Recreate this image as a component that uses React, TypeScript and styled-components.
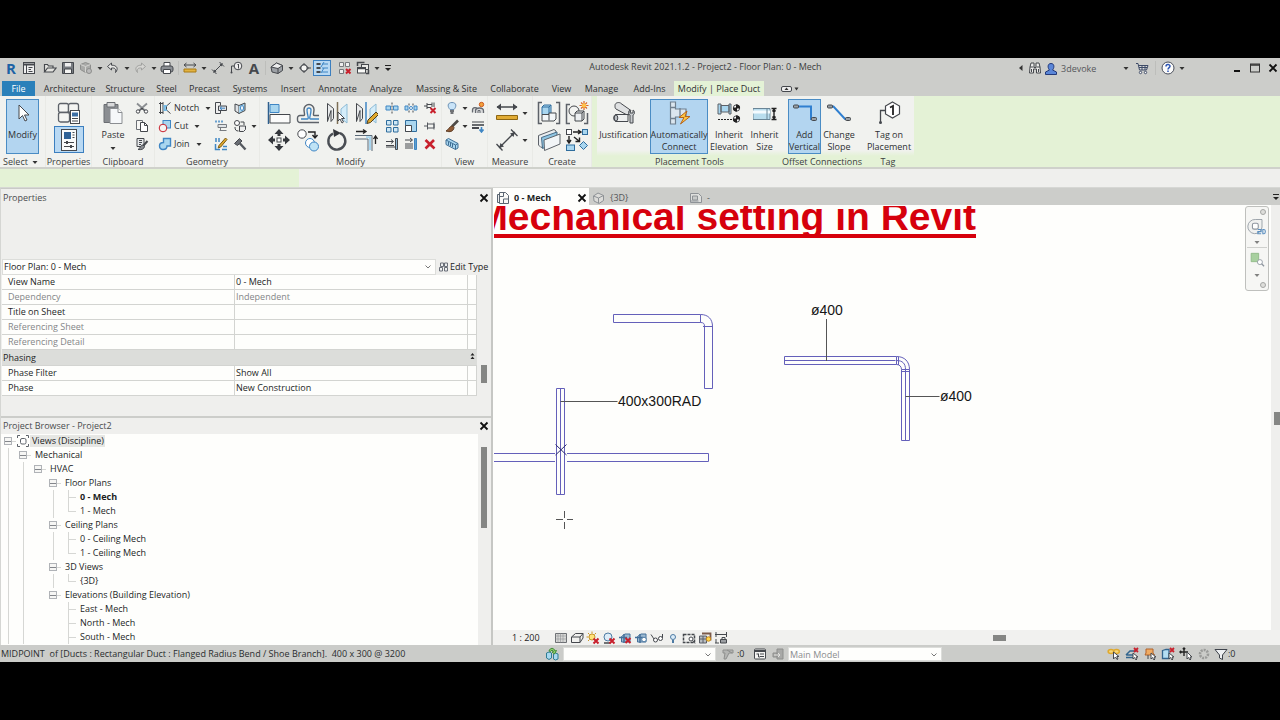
import React, { ReactNode } from 'react';
import styled, { createGlobalStyle, css } from 'styled-components';

const FONT = '"Open Sans", "Noto Sans", sans-serif';
const INK = '#45484d';
const BLUE = '#3f86c4';
const SKY = '#a9d6ef';
const RED = '#c8202c';
const GOLD = '#e0a92e';

const GlobalStyle = createGlobalStyle`
  * { box-sizing: border-box; }
  body { margin: 0; background: #000; }
  button, input, select { font: inherit; color: inherit; margin: 0; padding: 0; border: 0; background: none; border-radius: 0; }
  ul { list-style: none; margin: 0; padding: 0; }
`;

/* ---------- icons: 14px grid for small tools, 24px grid for large ones ---------- */

const small: Record<string, ReactNode> = {
  home: <><rect x="1.500" y="1.500" width="11" height="11" fill="#eee" stroke={INK} /><path d="M2 3.500h10" stroke={INK} strokeWidth="2" /><path d="M4.500 4v8M6.500 6.500h4M6.500 8.500h2.500M6.500 10.500h4" stroke={INK} /></>,
  open: <path d="M1.500 11V3.500h3l1 1.500H10v2M1.500 11L4.500 7h8.500L10 11z" fill="#e3e3df" stroke={INK} strokeWidth="1.200" />,
  save: <><path d="M1.500 1.500h11v11h-11z" fill="#777b80" stroke={INK} /><path d="M4 2h6v3.500H4z" fill="#eee" /><path d="M3.500 8h7v4.500h-7z" fill="#f4f4f2" stroke={INK} /></>,
  sync: <><path d="M6.500 1.500l5 2v5l-5 3-5-3v-5z" fill="#a9aaa8" stroke="#8d8e8c" /><path d="M1.500 3.500l5 2 5-2M6.500 5.500v6" stroke="#d4d4d1" fill="none" /><circle cx="10" cy="10" r="2.500" fill="#bbb" stroke="#8d8e8c" /></>,
  undo: <path d="M5.500 2L1.500 5.500l4 3.500V7c3-.2 5 .6 4 4.500 3.500-4 1-7.500-4-7.300z" fill="#e6e6e3" stroke={INK} />,
  redo: <path d="M8.500 2l4 3.500-4 3.500V7c-3-.2-5 .6-4 4.500C1 7.500 3.500 4 8.500 4.200z" fill="#d6d6d3" stroke="#a0a19f" />,
  print: <><path d="M4 5V1.500h6V5" fill="#fff" stroke={INK} /><rect x="1" y="5" width="12" height="6" rx="2" fill="#8b8f94" stroke={INK} /><path d="M3.500 8.500h7v4h-7z" fill="#fff" stroke={INK} /></>,
  measure: <><path d="M2 4h10" stroke={INK} /><path d="M3.500 2L1 4l2.500 2M10.500 2L13 4l-2.500 2" stroke={INK} fill="none" /><path d="M1 8h12v3H1z" fill="#e3b341" stroke="#a87a17" /></>,
  dim: <><path d="M2.500 11.500l9-9" stroke={INK} /><path d="M1 8.500L5.500 13M8.500 1L13 5.500" stroke={INK} /><path d="M2.500 11.500l.5-3 2.500 2.500zM11.500 2.500l-.5 3L8.500 3z" fill={INK} /></>,
  tag: <><circle cx="9" cy="5" r="3.800" fill="#eee" stroke={INK} /><path d="M5 5H2.500v7M8.500 4l1-1v4.500" stroke={INK} fill="none" /><circle cx="2.500" cy="11.500" r="1" fill={INK} /></>,
  view3d: <><path d="M1 6l5.500-4L12.500 4.500v5L8 12.500 2 11z" fill="#9da1a6" stroke={INK} /><path d="M1 6l5.500-4 6 2.500L8 7.500z" fill="#eceded" stroke={INK} /><path d="M8 7.500v5" stroke={INK} /></>,
  section: <><path d="M7 2L12 7l-5 5-5-5z" fill={INK} /><circle cx="7" cy="7" r="3.200" fill="#f4f4f2" stroke={INK} /><path d="M11 7h3" stroke={INK} /></>,
  thin: <><path d="M1.500 3h4M1.500 7h4M1.500 11h4" stroke={INK} strokeWidth="2" /><path d="M7 3h6M7 7h6M7 11h6" stroke={BLUE} /><path d="M9 1L6 6M9 7l-3 5" stroke={BLUE} /></>,
  closeHidden: <><path d="M1.500 1.500h4v4h-4zM7.500 1.500h4v4h-4zM1.500 8.500h4v4h-4z" fill="#eee" stroke="#777a7e" /><path d="M8 8l4.500 4.500M12.500 8L8 12.500" stroke={RED} strokeWidth="2" /></>,
  switchWin: <><path d="M1.500 5V1.500h7M12.500 9v3.500H10" stroke={INK} strokeWidth="1.500" /><rect x="5.500" y="3.500" width="7" height="5" fill="#e9e9e6" stroke={INK} /><rect x="1.500" y="6.500" width="8" height="5.500" fill="#fafaf8" stroke={INK} /><path d="M1.500 7.500h8" stroke={INK} strokeWidth="1.500" /></>,
  customize: <><path d="M4 4.500h6" stroke="#222" /><path d="M4 7h6l-3 3z" fill="#222" /></>,
  caret: <path d="M4.500 6h5L7 9z" fill="#333" />,
  left: <path d="M8.500 4v6L5 7z" fill="#333" />,
  binoculars: <path d="M2 6l1-4h3v4.500h2V2h3l1 4 .5 6H8.500V8h-3v4H1.500zM2 6h3.500M8.500 6H12M3.500 8v3M10.500 8v3" fill="#ececea" stroke={INK} />,
  person: <path d="M7 1.500c4 0 3.200 5 1.500 6.500l4 2v2.500h-11V10l4-2C3.800 6.500 3 1.500 7 1.500z" fill="#5a86d8" stroke="#233a7a" />,
  cart: <><path d="M1 2.500h2l1.500 6.500h7L13 4.500H4" fill="#d9dadb" stroke="#3d4a66" /><path d="M4 6.500h8M7 4.500V9M10 4.500V9" stroke="#3d4a66" /><circle cx="5.500" cy="11.500" r="1.200" fill="#fff" stroke="#3d4a66" /><circle cx="10.500" cy="11.500" r="1.200" fill="#fff" stroke="#3d4a66" /></>,
  help: <><circle cx="7" cy="7" r="6" fill="#fbfbfa" stroke="#4a4f5c" /><path d="M5 5.500C5 3 9 3 9 5.300 9 6.700 7 6.700 7 8.500M7 9.500v1.500" stroke="#2d56b5" strokeWidth="1.500" fill="none" /></>,
  min: <path d="M4 10h6" stroke="#111" strokeWidth="2" />,
  max: <><rect x="2.500" y="3" width="9" height="8" fill="none" stroke="#333" /><path d="M2.500 4h9" stroke="#333" strokeWidth="1.500" /></>,
  x: <path d="M3.500 3.500l7 7M10.500 3.500l-7 7" stroke="#111" strokeWidth="1.800" />,
  /* clipboard + geometry */
  scissors: <><path d="M2 2.500l8 7M12 2.500l-8 7" stroke="#8b8e92" strokeWidth="1.800" /><circle cx="3" cy="10.500" r="1.700" fill="#fff" stroke={INK} /><circle cx="11" cy="10.500" r="1.700" fill="#fff" stroke={INK} /><path d="M6 7l4 3M8 7l-4 3" stroke={INK} /></>,
  copy: <><path d="M1.500 1.500h6v9h-6z" fill="#f7f7f5" stroke="#6c7076" /><path d="M5.500 3.500h4l3 3v6h-7z" fill="#fff" stroke={INK} /><path d="M9.500 3.500v3h3" stroke={INK} fill="none" /></>,
  match: <><path d="M2 1.500h7v8H2z" fill="#e6e8ea" stroke={INK} /><path d="M4 3.500h3M4 5.500h3M4 7.500h2" stroke={INK} /><path d="M12.500 4L8.500 8.500" stroke={INK} strokeWidth="2" /><path d="M8 8c-3 0-2 3-5 4.500 4 .5 6-.5 6.500-3z" fill="#8b8e92" stroke={INK} /></>,
  notch: <><path d="M1 2.500h4M1 11.500h4M2.500 1v12M5 1v12" stroke={INK} /><path d="M12.500 1.500L8.500 5v4l4 3.500" stroke={INK} fill="none" /><path d="M5.500 4h4L7.500 7l2 3h-4z" fill="#78bce6" /></>,
  cut: <><rect x="5" y="1.500" width="7.500" height="7.500" fill={SKY} stroke={BLUE} /><circle cx="5" cy="9" r="3.800" fill="#f4f5f3" stroke={RED} /></>,
  join: <path d="M5.500 1.500h7V9H9c0 2.500-1.500 3.500-4 3.500S1.500 11 1.500 8.800 3 5.500 5.500 5.500z" fill={SKY} stroke={BLUE} strokeWidth="1.400" />,
  cope: <><path d="M1.500 1.500h5V4.500M1.500 1.500v11h5V10" fill="#eee" stroke={INK} /><path d="M4.500 5h8v4.500h-8z" fill="#dfe3e6" stroke={INK} /><path d="M11 7.200H6M8 5.500L6 7.200 8 9" stroke={BLUE} fill="none" /></>,
  wallJoin: <><path d="M2 1.500v2M5 1.500v2M8 1.500v2" stroke={BLUE} strokeWidth="1.500" /><path d="M4 5.500h8.500v3H4zM5.500 11.500h7M6.500 8.500v3" fill="#dfe3e6" stroke="#777b80" /></>,
  splitFace: <><path d="M2 1v4M5 1v4" stroke={BLUE} strokeWidth="1.500" /><path d="M11.500 1L5 8.500l-.8 2.500 2.500-1L13 2.500z" fill={GOLD} stroke="#7b5b14" /><path d="M1.500 7v5.500H6M8 12.500h5M9 9.500h4" stroke={BLUE} fill="none" strokeWidth="1.500" /></>,
  face: <><path d="M2 3l4 1.500v8L2 10z" fill="#dfe3e6" stroke={INK} /><path d="M6 4.500L12 2v7.500l-6 3" fill={SKY} stroke={INK} /><ellipse cx="9" cy="7" rx="1.500" ry="2.500" fill="#fff" stroke={BLUE} /></>,
  paint2: <><circle cx="4" cy="4" r="2.500" fill="#fff" stroke={INK} /><path d="M7.500 3h3.500v3M2 8c0 3 1 4 3.500 4" stroke={INK} fill="none" /><path d="M6.500 7h6v3.500l-2 2h-4z" fill="#eceded" stroke={INK} /></>,
  hammer: <><path d="M1.500 6.500l5-5L9 4 4.500 8.500z" fill="#6a6e74" stroke={INK} /><path d="M6.500 6l6 6.500" stroke="#55595f" strokeWidth="2.400" /></>,
  /* modify small */
  split: <><path d="M1 5h4.500v4H1zM8.500 5H13v4H8.500z" fill={SKY} stroke={BLUE} /><path d="M7 1.500v11" stroke={INK} strokeDasharray="2 1" /></>,
  splitGap: <><path d="M1 5h3v4H1zM10 5h3v4h-3z" fill={SKY} stroke={BLUE} /><circle cx="7" cy="7" r="1.500" fill="#fff" stroke={BLUE} /><path d="M5 2.500v2M9 2.500v2M5 9.500v2M9 9.500v2" stroke={INK} /></>,
  array: <path d="M1.500 1.500H6V6H1.500zM8.500 1.500H13V6H8.500zM1.500 8.500H6V13H1.500zM8.500 8.500H13V13H8.500z" fill="#cfe8f6" stroke="#2f6d9d" />,
  scale: <><path d="M1.500 1.500h11v11h-11z" fill={SKY} stroke="#2f6d9d" /><path d="M1.500 6.500h6v6h-6z" fill="#fff" stroke={INK} /></>,
  trim: <><path d="M1 4.500h7M1 10h9" stroke={INK} /><path d="M6 2.500L8.500 4.500 6 6.500M1 8.500h8" stroke={INK} fill="none" /><path d="M10.500 1.500h2v11h-2z" fill="#8fb8d4" stroke={INK} /></>,
  trimM: <><path d="M1 3h7M1 7h8M1 9h8M1 11h8" stroke={INK} /><path d="M6 1L8.500 3 6 5" stroke={INK} fill="none" /><path d="M10.500 1.500h2v11h-2z" fill="#5f9fcb" stroke={BLUE} /></>,
  unpin: <><path d="M1 5h3M4 2v6M4 3.500h5M4 6.500h4M9 1.500V6M11 1.500V6" stroke={INK} fill="none" /><path d="M7.500 7l5 5M12.500 7l-5 5" stroke={RED} strokeWidth="2" /></>,
  pin: <path d="M1 7h3.500M4.500 3.500v7M4.500 5H11v4H4.500M11 3.500v7" fill="none" stroke="#55595f" />,
  del: <path d="M2.500 3l9 8.500M11 3l-8.500 8.500" stroke={RED} strokeWidth="2.600" />,
  /* view */
  bulb: <><path d="M7 1.500c5 0 4.500 4.500 2 7H5c-2.500-2.500-3-7 2-7z" fill="#c9e4f8" stroke="#6b91b5" /><path d="M5 10h4M5.500 12h3" stroke={INK} strokeWidth="1.500" /></>,
  brush: <><path d="M13 1.500L7 7.500" stroke="#4e4b47" strokeWidth="2.600" /><path d="M7.500 7C4 7 4.500 10.500 1 12c4 1.500 7.500.5 8-3.500z" fill="#8e5a35" stroke="#5d3b22" /></>,
  cutProfile: <path d="M1 3l2.500-1.500 9.500 5V11l-2.500 1.500L1 7.500zM1 3l9.500 5v4.500M10.500 8L13 6.500M3.500 5v3M5.500 6v3M7.500 7v3" fill={SKY} stroke="#3f6f95" />,
  override: <><path d="M1.500 11.500V9C1.500 6 6 6 6 8M4.500 12V10c0-4 8-4 8 0v2" fill="#d9dadb" stroke="#666a70" strokeWidth="1.300" /><path d="M7 12V9.500h2V12" stroke="#666a70" /><circle cx="10.500" cy="3.500" r="2.200" fill="#f0a23c" stroke="#d0581c" /></>,
  linework: <><path d="M1 3h12" stroke={INK} /><path d="M1 6h12" stroke={INK} strokeWidth="1.600" /><path d="M1 9h7" stroke={INK} strokeWidth="2" /><path d="M10.500 8v4M8.500 10.500l2 2.500 2-2.500" stroke={BLUE} strokeWidth="1.600" fill="none" /></>,
  /* tabs, panels */
  plan: <><path d="M1.500 3.500h5v8h-5z" fill="#eee" stroke="#5b6672" /><path d="M3.500 1.500h6l3 3v8h-9z" fill="#fafaf8" stroke="#5b6672" /><path d="M3.500 5.500h4v-4M7.500 8h5M7.500 8v4.500" stroke="#5b6672" fill="none" /></>,
  cube: <><path d="M1.500 5L6 2l5.500 2.500v5L7 12.500 2 10z" fill="#dcdcd9" stroke="#8e9296" /><path d="M1.500 5l5 2 5-2.500M6.500 7v5" stroke="#8e9296" /></>,
  sheet: <><path d="M1.500 2.500h8l3 3v6h-11z" fill="#dfe0de" stroke="#8e9296" /><path d="M3.500 5h5v4h-5zM1.500 10h8" fill="#c8cac9" stroke="#8e9296" /></>,
  typeGrid: <path d="M4.500 3h3v3.500h-3zM8.500 3h3v3.500h-3zM3.500 7.500h3V11h-3zM8.500 7.500h3V11h-3z" fill="#eceeef" stroke="#6a6f78" />,
  views: <><rect x="4.500" y="4.500" width="5.500" height="5.500" rx="1.500" fill="#fff" stroke="#5f646b" /><path d="M1.500 4V1.500H4M10 1.500h2.500V4M12.500 10v2.500H10M4 12.500H1.500V10" fill="none" stroke="#5f646b" /></>,
  /* view control bar */
  hatch: <><path d="M1.500 2.500h11v9h-11z" fill="#d7d8d6" stroke="#6c6f73" /><path d="M1.500 5h11M1.500 8h11M4 2.500v9M6.500 2.500v9M9 2.500v9" stroke="#84878b" strokeDasharray="1 1" /></>,
  box: <><path d="M1.500 6l4-3.500H13V7l-3 4.500H1.500z" fill="#f1f1ef" stroke={INK} /><path d="M1.500 6H10v5.500M10 6l3-3.500" stroke={INK} /></>,
  sunX: <><circle cx="6" cy="6" r="3" fill="#ffe27a" stroke="#c9962a" /><path d="M6 .5v2M.5 6h2M2 2l1.500 1.500M10 2L8.500 3.500M2 10l1.500-1.500" stroke="#c9962a" /><path d="M7.500 7.500l5 5M12.500 7.500l-5 5" stroke={RED} strokeWidth="2" /></>,
  shadowX: <><circle cx="6" cy="6" r="4" fill="#dcecf8" stroke="#4e7ba3" /><path d="M2 12h6" stroke={INK} strokeWidth="1.500" /><path d="M7.500 7.500l5 5M12.500 7.500l-5 5" stroke={RED} strokeWidth="2" /></>,
  cropX: <><path d="M3.500 11V5.500L7 3h5v8z" fill="#9dbad2" stroke="#44709a" /><path d="M1 6.500h8M6 3v9" stroke="#44709a" strokeWidth="1.500" /><path d="M7.500 7l5 5M12.500 7l-5 5" stroke={RED} strokeWidth="2" /></>,
  crop: <><path d="M3.500 11V5.500L7 3h5v8z" fill="#9dbad2" stroke="#44709a" /><path d="M1 6.500h8M6 3v9" stroke="#44709a" strokeWidth="1.500" /><circle cx="10" cy="8.500" r="2.300" fill="#fff" stroke="#4e7ba3" /></>,
  glasses: <><path d="M1 3.500l3 4.500M12.500 3v4" stroke={INK} /><circle cx="5.500" cy="9" r="2" fill="#fff" stroke={INK} /><circle cx="10.500" cy="7.500" r="2" fill="#fff" stroke={INK} /></>,
  bulbS: <><circle cx="7" cy="6" r="2.500" fill="#dcecf8" stroke="#4e7ba3" /><path d="M7 9v3" stroke="#4e7ba3" strokeWidth="2" /></>,
  tempView: <><path d="M1.500 3.500h11v8h-11z" fill="#f1f1ef" stroke={INK} strokeWidth="1.500" strokeDasharray="3 1" /><circle cx="9" cy="8" r="2" fill="#fff" stroke={INK} /><path d="M10.500 9.500L13 12.500" stroke={INK} /></>,
  analytic: <><path d="M1.500 5h7v7h-7z" fill="#b7bcc1" stroke="#5b5f66" /><path d="M1.500 8h7M5 5v7" stroke="#5b5f66" /><path d="M4 2.500h8.500v7" stroke="#7b5a4a" strokeWidth="1.800" fill="none" /><circle cx="10.500" cy="8" r="2.200" fill="#ffd64d" stroke="#c98a1a" /></>,
  constraint: <><path d="M1 3.500h12M2 1v5M12.500 1v5M2 8v4M5 12H1" stroke={INK} /><path d="M6.500 8.500h6V12h-6z" fill="#9b9ea2" stroke={INK} /><path d="M8 8.500V6.500h3v2" fill="none" stroke={INK} /></>,
  /* status bar */
  worksets: <><path d="M1.500 6v5L4 12.500 6.500 11V6L4 5z" fill="#a7d8ef" stroke="#2f7c93" /><path d="M8.500 7v5l2 1 2.500-1V7L10.500 6z" fill="#a7d8ef" stroke="#2f7c93" /><path d="M4 4c1-3.500 5-3.500 6 0l1.500-.5L9.500 7 7 5l1.500-.5C8 3 6 3 5.500 4.500z" fill="#8ed06c" stroke="#3f8a35" /></>,
  request: <path d="M2 3h10v3H8l-3 6H3l1-6H2zM6 3l5 3" fill="#b4b5b3" stroke="#8e8f8d" />,
  options: <><rect x="1.500" y="2" width="11" height="10" rx="1" fill="#f4f4f2" stroke={INK} /><path d="M1.500 4h11" stroke={INK} strokeWidth="2" /><path d="M3.500 7H6M7 7h4M7 9.500h4M5.500 7v3H7" stroke={INK} /></>,
  optGrey: <><path d="M6 2h6v10H6zM2 6h4v4H2z" fill="#a8a9a7" stroke="#8e8f8d" /><path d="M3 8h6M7 6l2 2-2 2" stroke="#e2e2df" fill="none" /></>,
  selLink: <><ellipse cx="4" cy="4.500" rx="2.800" ry="2" fill="#f6d87c" stroke={GOLD} strokeWidth="1.600" /><ellipse cx="9.500" cy="4.500" rx="2.800" ry="2" fill="#f6d87c" stroke={GOLD} strokeWidth="1.600" /><path d="M6.500 5v7l2-2 1.500 2.500L11 12 9.800 9.500H12z" fill="#fff" stroke={INK} /></>,
  selUnder: <><path d="M1 8l4-4h6M1 8h7M1 10.500h7" fill="none" stroke="#33658e" strokeWidth="1.500" /><path d="M9 1l4 4M13 1L9 5" stroke={RED} strokeWidth="1.800" /><path d="M8 6v6l1.500-1.500L11 13l1-1-1-2h2z" fill="#fff" stroke={INK} /></>,
  selPin: <><path d="M3 2h7v4l1.500 2H2l1-2z" fill="#f0ab62" stroke="#b1622a" /><path d="M5 8v4" stroke={INK} /><path d="M8 6v6l1.500-1.500L11 13l1-1-1-2h2z" fill="#fff" stroke={INK} /></>,
  selFace: <><path d="M1.500 3.500L5 2.500h3v9H1.500z" fill="#b3def3" stroke="#33658e" strokeWidth="1.300" /><path d="M9 1l4 4M13 1L9 5" stroke={RED} strokeWidth="1.800" /><path d="M8 6v6l1.500-1.500L11 13l1-1-1-2h2z" fill="#fff" stroke={INK} /></>,
  dragSel: <><path d="M5 1v8M1 5h8M3.800 2.200L5 1l1.200 1.200M2.200 3.800L1 5l1.200 1.200" stroke="#222" strokeWidth="1.400" fill="none" /><path d="M8 5v7l1.500-1.500L11 13l1-1-1-2h2z" fill="#fff" stroke={INK} /></>,
  gear: <circle cx="7" cy="7" r="4" fill="none" stroke="#9a9b99" strokeWidth="2.600" strokeDasharray="2 1" />,
  filter: <path d="M1 2.500h12L8.500 8v4.500l-3-1.500V8z" fill="#eef0f2" stroke="#3e434b" />,
  expand: <path d="M2.500 5.500L4.500 3l2 2.500zM2.500 9L4.500 6.500l2 2.500z" fill="#222" />,
  chevron: <path d="M4.500 5.500L7 8l2.500-2.500" stroke="#777" fill="none" />,
};

const large: Record<string, ReactNode> = {
  pointer: <path d="M8 4v14l3.500-3.500L14 20l2-1-2.500-5H18z" fill="#fff" stroke={INK} />,
  typeProps: <><rect x="1.500" y="2.500" width="10" height="9" rx="2" fill="#f4f5f3" stroke="#5d6269" strokeWidth="1.300" /><rect x="11.500" y="2.500" width="10" height="9" rx="2" fill="#f4f5f3" stroke="#5d6269" strokeWidth="1.300" /><rect x="1.500" y="11.500" width="11" height="9.500" rx="2" fill="#f4f5f3" stroke="#5d6269" strokeWidth="1.300" /><rect x="13.500" y="9.500" width="9" height="13" fill="#fff" stroke={INK} /><path d="M15 11.500h6v4h-6z" fill="#3c6fa5" /><path d="M15 17.500h6M15 20h6" stroke={INK} /></>,
  props: <><rect x="4.500" y="1.500" width="15" height="21" fill="#fafbfb" stroke={INK} /><path d="M7 4h7v7H7z" fill="#2f6297" /><path d="M15.500 4.500h2M15.500 7h2M15.500 9.500h2M7 14.500h10M7 18.500h10" stroke={INK} /><path d="M10 13v3M14 17v3" stroke={INK} strokeWidth="2" /></>,
  paste: <><path d="M3 3.500h14v18H3z" fill="#8b8e92" stroke="#6b6e73" /><path d="M6 1.500h8V6H6z" fill="#d9dadb" stroke="#6b6e73" /><path d="M9 7.500h8l4 4v11H9z" fill="#f6f8fa" stroke="#8b8e92" /><path d="M17 7.500v4h4" fill="#fff" stroke="#8b8e92" /></>,
  align: <><path d="M1.500 1v22" stroke="#2f5f8d" strokeWidth="1.500" /><path d="M3 3.500h9v8H3z" fill={SKY} stroke={BLUE} /><path d="M3 13.500h20v8.500H3z" fill="#fbfbfa" stroke={INK} /></>,
  offset: <><path d="M23 14.500h-4.500c-2 0-.5-2.500-.5-6a5 5 0 0 0-10 0c0 3.500 1.500 6-.5 6H4a2.500 2.500 0 0 0-2.500 2.500v2A2.500 2.500 0 0 0 4 21.500h19" fill="none" stroke="#5d6269" strokeWidth="1.400" /><path d="M23 18H14.500c-2 0 .5-4 .5-9a2 2 0 0 0-4 0c0 5 2.500 9 .5 9H5" fill="none" stroke={BLUE} strokeWidth="1.300" /></>,
  mirrorPick: <><path d="M2.500 2.500l6 5v10l-2.500 3V9.500l-3.500 11z" fill="#e9ebec" stroke={INK} /><path d="M22 3l-6 5v9l6 5z" fill="#d4edfa" stroke="#8dbbd6" /><path d="M12.500 1v22" stroke="#7d6f55" strokeWidth="1.500" /><path d="M13 11v9l2-2 2 4 1.500-1-2-3.500h3z" fill="#fff" stroke={INK} /></>,
  mirrorDraw: <><path d="M2.500 2.500l6 5v10l-2.500 3V9.500l-3.500 11z" fill="#e9ebec" stroke={INK} /><path d="M22 3l-6 5v9l6 5z" fill="#d4edfa" stroke="#8dbbd6" /><path d="M12 1v22" stroke={BLUE} strokeWidth="1.500" /><path d="M22 11l-8 8-1 3.500 3.500-1 8-8z" fill={GOLD} stroke="#4f4022" /></>,
  move: <><path d="M12 1l4.500 5h-9zM12 23l4.500-5h-9zM1 12l5-4.500v9zM23 12l-5-4.500v9z" fill="#34373c" /><path d="M12 5v3M12 16v3M5 12h3M16 12h3" stroke="#34373c" strokeWidth="3" /><rect x="10" y="10" width="4" height="4" fill="#fff" stroke={INK} /></>,
  copyL: <><circle cx="6" cy="6" r="4.200" fill="#fff" stroke={INK} /><path d="M12 4h7v5M16.500 7l2.500 3 2.500-3" fill="none" stroke="#222" strokeWidth="1.400" /><circle cx="14" cy="15" r="4.500" fill="#fff" stroke={BLUE} /><circle cx="18" cy="18.500" r="4.500" fill="#bfe3f6" stroke={BLUE} /></>,
  rotate: <><path d="M15 5.200A8.500 8.500 0 1 1 8 5.500" fill="none" stroke="#4a4e54" strokeWidth="2.400" /><path d="M8 1l8 4-7 4z" fill="#34373c" /></>,
  trimCorner: <><path d="M1 7.500h17V23M1 11h13v12" fill="none" stroke="#5b6a78" /><path d="M12 9.200h4V22" stroke={SKY} strokeWidth="2" fill="none" /><path d="M2 3.500h9M9 1.500l3 2-3 2M21.500 16V9M19.500 11l2-3 2 3" fill="none" stroke="#222" strokeWidth="1.300" /></>,
  ruler: <><path d="M2 6h20" stroke={INK} strokeWidth="1.500" /><path d="M6 2.500L1.500 6 6 9.500zM18 2.500L22.500 6 18 9.500z" fill={INK} /><path d="M1.500 14.500h21v4h-21z" fill="#e0ab34" stroke="#8d6612" /></>,
  aligned: <><path d="M4 20L20 4M1.500 16l6 6.500M16 1.500L22.500 8" stroke={INK} strokeWidth="1.300" /><path d="M4 20l1.500-5 3.500 3.500zM20 4l-1.500 5L15 5.500z" fill={INK} /></>,
  group: <><path d="M5 1.500H1.500v21H5M19 1.500h3.500v21H19" fill="none" stroke="#5d6269" strokeWidth="1.500" /><path d="M5 6l2-2h7v8l-2 1.500H5z" fill={SKY} stroke="#2f6d9d" /><path d="M5 6h7l2-2M12 6v7" stroke="#2f6d9d" /><path d="M5 13.500h7V12h7v6l-2 2H5z" fill="#f2f6f8" stroke={INK} /><path d="M12 13.500v6" stroke={INK} /></>,
  similar: <><path d="M5 3.500H1.500v19H5M19 22.500h3.500V12" fill="none" stroke="#5d6269" strokeWidth="1.500" /><circle cx="9" cy="10" r="5" fill="#f2f3f1" stroke={INK} /><path d="M10 12l2-2h7v8l-2 2h-7z" fill="#eceff1" stroke={INK} /><path d="M10 12h7v8M17 12l2-2" stroke={INK} /><path d="M19 0v9M14.500 4.500h9M16 1.500l6 6M22 1.500l-6 6" stroke="#d9662a" strokeWidth="1.200" /><circle cx="19" cy="4.500" r="2.200" fill="#ffc24a" /></>,
  assembly: <><path d="M1.500 7.500L17 1.500l2 1.500v10L4 19.500 1.500 17z" fill="#e9edf0" stroke="#5d6269" /><path d="M4.500 9.500L20 4v10L5.500 20.500z" fill="#8fc6e4" stroke="#466a86" /><path d="M7 12l16-6v10L7.500 22.500z" fill="#f2f5f7" stroke="#5d6269" /></>,
  parts: <><rect x="1.500" y="1.500" width="5" height="5" fill="#fff" stroke={INK} /><rect x="17.500" y="1.500" width="5" height="5" fill={SKY} stroke="#2f6d9d" /><path d="M8 4h7M13 2l3 2-3 2M4 8v6M2 12l2 3 2-3M9 9l5 4M14.500 9.500v4h-4" fill="none" stroke="#222" strokeWidth="1.400" /><rect x="1.500" y="17" width="8" height="5.500" fill={SKY} stroke="#2f6d9d" /><path d="M18.500 13.500l4 4-4 4-4-4z" fill={SKY} stroke="#2f6d9d" /></>,
  justify: <><path d="M3 4.500C3 1 8 1 9 2.500l10 7-3 5L4 8C3 7.500 3 6 3 4.500z" fill="#dfe1e2" stroke={INK} /><path d="M4 13.500c-3 0-3 7 0 7h12v-7z" fill="#eef0f0" stroke={INK} /><ellipse cx="4" cy="17" rx="1.800" ry="3" fill="#bcc0c4" stroke={INK} /><path d="M18 22V14c-2-1-2-4 0-5v3h3V9c2 1 2 4 0 5v8z" fill="#c9cccf" stroke={INK} /></>,
  autoConnect: <><path d="M3.500 1v22h5V16H19V8H8.500V1z" fill="#dbe6ef" stroke="#70808f" strokeWidth="1.200" /><path d="M3.500 6.500h5M3.500 17.500h5M13 7v10" stroke="#70808f" strokeWidth="1.300" /><path d="M20 10l-8 6.500h5L13.500 23 23 15.500h-5z" fill="#ffc843" stroke="#b5651d" /></>,
  inhElev: <><path d="M1 3h3v10H1zM4 4.500h8v6.500H4zM12 3h2v10h-2z" fill={SKY} stroke="#5d6269" /><path d="M1 18.500h15" stroke="#222" strokeDasharray="2 1" /><circle cx="19.500" cy="7" r="3.200" fill="#fff" stroke={INK} /><path d="M19.500 7V3.800A3.200 3.200 0 0 1 22.700 7zM19.500 7v3.200A3.200 3.200 0 0 1 16.300 7z" fill="#222" stroke="#222" /><circle cx="19.500" cy="18" r="3.200" fill="#fff" stroke={INK} /><path d="M19.500 18v-3.200a3.200 3.200 0 0 1 3.200 3.200zM19.500 18v3.200a3.200 3.200 0 0 1-3.200-3.200z" fill="#222" stroke="#222" /></>,
  inhSize: <><path d="M0 7.500h17v11H0z" fill="#b9ddee" stroke="#6a8596" /><path d="M0 11h17" stroke="#f4fbff" strokeWidth="3" /><path d="M14 7.500v11" stroke="#6a8596" /><path d="M21 8v10M18.500 7.500h5M18.500 18.500h5M19.500 10.500l1.500-2 1.500 2M19.500 15.500l1.500 2 1.500-2" stroke="#222" fill="none" strokeWidth="1.400" /></>,
  addVert: <><path d="M3 5.500h15V18h3" fill="none" stroke="#2f7fd0" strokeWidth="2" /><rect x="0.500" y="4" width="5" height="3" rx="1" fill="#9aa0a6" stroke={INK} /><rect x="18.500" y="16.500" width="5" height="3" rx="1" fill="#9aa0a6" stroke={INK} /></>,
  slope: <><path d="M3 5.500h3.500L18 18h3" fill="none" stroke="#2f7fd0" strokeWidth="2" /><rect x="0.500" y="4" width="5" height="3" rx="1" fill="#9aa0a6" stroke={INK} /><rect x="18.500" y="16.500" width="5" height="3" rx="1" fill="#9aa0a6" stroke={INK} /></>,
  tagL: <><path d="M15.500 1l7 4v8l-7 4-7-4V5z" fill="#fff" stroke={INK} strokeWidth="1.200" /><path d="M13 6.500L16 5v9" fill="none" stroke="#222" strokeWidth="1.800" /><path d="M8.500 9.500h-5V21" fill="none" stroke={INK} strokeWidth="1.300" /><circle cx="3.500" cy="21.500" r="1.500" fill={INK} /></>,
  wheel: <><path d="M10 3h8v9a8.500 8.500 0 1 1-8-9z" fill="#f0f1f0" stroke="#8d959e" /><rect x="6.500" y="7.500" width="7" height="7" rx="2" fill="#fff" stroke="#8d959e" strokeWidth="1.300" /><path d="M13 15h4v2.500h-4V20h4M19 15v5h1.500c2 0 2-5 0-5z" fill="none" stroke="#5b8fc0" strokeWidth="1.300" /></>,
  zoomRegion: <><path d="M5 4h9v10H5z" fill="#a8d09f" stroke="#8ab682" /><circle cx="15.500" cy="14.500" r="3" fill="#fff" stroke="#8d959e" /><path d="M17.500 16.500l3 3" stroke="#8d959e" strokeWidth="1.500" /></>,
};

const Svg = styled.svg`
  display: block;
  flex: none;
  fill: none;
`;
const Icon = ({ name }: { name: string }) => (
  <Svg width="14" height="14" viewBox="0 0 14 14" aria-hidden="true">{small[name]}</Svg>
);
const BigIcon = ({ name, size = 24 }: { name: string; size?: number }) => (
  <Svg width={size} height={size} viewBox="0 0 24 24" aria-hidden="true">{large[name]}</Svg>
);

/* ---------- window frame ---------- */

const Page = styled.div`
  min-height: 100vh;
  padding: 58px 0;
  display: flex;
  flex-direction: column;
  background: #000;
  font: 9px/12px ${FONT};
  color: #2f3133;
`;
const Window = styled.main`
  flex: 1;
  min-width: 0;
  display: flex;
  flex-direction: column;
  background: #efefed;
  overflow: hidden;
`;
const TitleBar = styled.header`
  display: flex;
  align-items: center;
  height: 23px;
  padding: 0 0 3px 2px;
  background: #cccdca;
`;
const Tools = styled.div`
  display: flex;
  align-items: center;
`;
const Caption = styled.h1`
  flex: 1;
  margin: 0;
  padding-bottom: 3px;
  font-size: 9px;
  font-weight: 400;
  text-align: center;
  white-space: nowrap;
  color: #3c3e40;
`;
const IconButton = styled.button<{ $w?: number; $h?: number; $on?: boolean }>`
  flex: none;
  display: flex;
  align-items: center;
  justify-content: center;
  width: ${p => p.$w ?? 18}px;
  height: ${p => p.$h ?? 16}px;
  ${p => p.$on && css`background: #b9d9f3; box-shadow: inset 0 0 0 1px #3c7fbf;`}
`;
const Rule = styled.span<{ $w?: number; $line?: boolean }>`
  flex: none;
  width: ${p => p.$w ?? 5}px;
  height: 14px;
  ${p => p.$line && css`background: linear-gradient(#bdbebb, #bdbebb) center / 1px 100% no-repeat;`}
`;
const Letter = styled.span<{ $color: string }>`
  font: 700 15px/16px ${FONT};
  color: ${p => p.$color};
`;
const Account = styled.button`
  display: flex;
  align-items: center;
  gap: 3px;
  width: 77px;
  height: 16px;
  padding-top: 1px;
  color: #55575a;
`;

const TabRow = styled.nav`
  display: flex;
  height: 15px;
  padding-left: 2px;
  background: #cccdca;
`;
const Tab = styled.button<{ $w: number; $kind?: 'file' | 'active' }>`
  flex: none;
  width: ${p => p.$w}px;
  padding-top: 1px;
  text-align: center;
  white-space: nowrap;
  ${p => p.$kind === 'file' && css`background: #2a80ba; color: #fff; margin-right: 4px;`}
  ${p => p.$kind === 'active' && css`background: #e4f2d6;`}
`;

/* ---------- ribbon ---------- */

const Ribbon = styled.section`
  display: flex;
  height: 73px;
  background: #e4f2d6;
  border-bottom: 2px solid #cfd1cb;
`;
const Panel = styled.div<{ $w: number; $ctx?: boolean }>`
  flex: none;
  width: ${p => p.$w}px;
  display: flex;
  flex-direction: column;
  ${p => p.$ctx ? '' : css`background: #f1f2ef; border-right: 1px solid #e9eae6;`}
`;
const PanelBody = styled.div<{ $pad?: number; $ctx?: boolean }>`
  display: flex;
  height: 60px;
  padding: 3px 0 3px ${p => p.$pad ?? 0}px;
  ${p => p.$ctx && css`background: linear-gradient(#f1f2ef 90%, #e4f2d6);`}
`;
const PanelTitle = styled.div`
  height: 11px;
  display: flex;
  align-items: center;
  justify-content: center;
  white-space: nowrap;
  color: #3c3e40;
`;
const BigButton = styled.button<{ $w: number; $on?: boolean }>`
  flex: none;
  display: flex;
  flex-direction: column;
  align-items: center;
  width: ${p => p.$w}px;
  height: 55px;
  padding-top: 2px;
  white-space: nowrap;
  ${p => p.$on && css`background: #b3d5f0; box-shadow: inset 0 0 0 1px #4a8cc4;`}
`;
const BigLabel = styled.span`
  padding-top: 4px;
  line-height: 12px;
`;
const Column = styled.div<{ $w: number; $rows: 2 | 3; $start?: boolean }>`
  flex: none;
  width: ${p => p.$w}px;
  display: grid;
  grid-template-rows: ${p => (p.$rows === 3 ? 'repeat(3, 18px)' : 'repeat(2, 27px)')};
  justify-items: ${p => (p.$start ? 'start' : 'center')};
  align-items: center;
`;
const TextTool = styled.button`
  display: flex;
  align-items: center;
  gap: 2px;
  white-space: nowrap;
`;
const Spacer = styled.span<{ $w: number }>`
  flex: none;
  width: ${p => p.$w}px;
`;

const OptionsBar = styled.div`
  display: flex;
  height: 19px;
  background: #efefed;
  border-bottom: 1px solid #d6d7d4;
`;
const OptionsTint = styled.div`
  flex: none;
  width: 299px;
  background: #e4f2d6;
`;

/* ---------- docked palettes ---------- */

const Workspace = styled.div`
  flex: 1;
  min-height: 0;
  display: flex;
`;
const Dock = styled.aside`
  flex: none;
  width: 493px;
  padding-top: 1px;
  display: flex;
  flex-direction: column;
  border-top: 1px solid #c9cac7;
  border-left: 1px solid #d5d6d3;
  border-right: 2px solid #c6c7c4;
`;
const PaletteHead = styled.div`
  display: flex;
  align-items: center;
  justify-content: space-between;
  height: 16px;
  padding-left: 2px;
  color: #4a4c4e;
`;
const Palette = styled.section<{ $grow?: boolean }>`
  display: flex;
  flex-direction: column;
  ${p => (p.$grow ? css`flex: 1; min-height: 0;` : css`flex: none; height: 228px; border-bottom: 2px solid #cccdca;`)}
`;
const TypeRow = styled.div`
  display: flex;
  align-items: center;
  height: 16px;
  margin-top: 53px;
  padding-left: 1px;
`;
const SelectBox = styled.span<{ $w: number; $h: number; $muted?: boolean }>`
  flex: none;
  display: grid;
  grid-template-columns: 1fr 14px;
  align-items: center;
  width: ${p => p.$w}px;
  height: ${p => p.$h}px;
  background: #fefefc;
  border: 1px solid #dcddda;
  color: ${p => (p.$muted ? '#8b8d8f' : '#222')};
  select {
    grid-area: 1 / 1 / 2 / 3;
    appearance: none;
    width: 100%;
    height: 100%;
    padding-left: 1px;
    outline: 0;
  }
  svg { grid-area: 1 / 2 / 2 / 3; pointer-events: none; }
`;
const EditType = styled.button`
  display: flex;
  align-items: center;
  white-space: nowrap;
  color: #222;
`;
const Scrolled = styled.div`
  display: flex;
  flex: 1;
  min-height: 0;
`;
const Track = styled.div<{ $top: number }>`
  flex: 1;
  display: flex;
  justify-content: flex-end;
  align-items: flex-start;
  padding: ${p => p.$top}px 4px 0 0;
`;
const Thumb = styled.span<{ $w: number; $h: number }>`
  display: block;
  width: ${p => p.$w}px;
  height: ${p => p.$h}px;
  background: #858684;
`;
const PropTable = styled.table`
  flex: none;
  align-self: flex-start;
  width: 475px;
  margin-left: 1px;
  table-layout: fixed;
  border-collapse: separate;
  border-spacing: 0;
  background: #fefefc;
  color: #1d1e1f;
  td, th {
    height: 15px;
    padding: 0 0 0 1px;
    line-height: 14px;
    font-weight: 400;
    text-align: left;
    border-right: 1px solid #d3d4d1;
    border-bottom: 1px solid #d3d4d1;
  }
`;
const PropRow = styled.tr<{ $muted?: boolean }>`
  color: ${p => (p.$muted ? '#848688' : 'inherit')};
  && th { padding-left: 6px; }
`;
const GroupRow = styled.tr`
  && th {
    height: 16px;
    background: #dcddda;
    border-right: 0;
  }
  && th:last-child { padding: 0; vertical-align: top; }
`;

const Tree = styled.ul`
  flex: none;
  width: 477px;
  overflow: hidden;
  background: #fefefc;
  color: #1d1e1f;
`;
const Branch = styled.li<{ $bold?: boolean }>`
  display: flex;
  align-items: center;
  height: 14px;
  white-space: nowrap;
  font-weight: ${p => (p.$bold ? 700 : 400)};
`;
const line = (pos: string) => `linear-gradient(#d6d7d4, #d6d7d4) ${pos} no-repeat`;
const guides: Record<string, string> = {
  ' ': 'none',
  '|': line('7px 0 / 1px 14px'),
  '+': `${line('7px 0 / 1px 14px')}, ${line('7px 7px / 8px 1px')}`,
  L: `${line('7px 0 / 1px 7px')}, ${line('7px 7px / 8px 1px')}`,
  '-': line('7px 7px / 8px 1px'),
};
const Guide = styled.span<{ $kind: string }>`
  flex: none;
  display: flex;
  align-items: center;
  width: 15px;
  height: 14px;
  padding-left: 3px;
  background: ${p => guides[p.$kind]};
`;
const Toggle = styled.button`
  width: 8px;
  height: 8px;
  && {
    border: 1px solid #b0b3b7;
    background: linear-gradient(#83868b, #83868b) center / 6px 1px no-repeat #f6f6f4;
  }
`;
const BranchName = styled.span<{ $root?: boolean }>`
  padding: 0 4px;
  ${p => p.$root && css`padding: 0 1px 0 2px; background: #e6e7e4;`}
`;

/* ---------- drawing area ---------- */

const ViewArea = styled.section`
  flex: 1;
  min-width: 0;
  display: flex;
  flex-direction: column;
`;
const ViewTabs = styled.nav`
  display: flex;
  align-items: center;
  height: 17px;
  background: #cccdca;
`;
const ViewTab = styled.button<{ $w: number; $on?: boolean }>`
  flex: none;
  display: flex;
  align-items: center;
  gap: 4px;
  width: ${p => p.$w}px;
  height: 17px;
  padding: 2px 0 0 3px;
  color: #55575a;
  ${p => p.$on && css`background: #fefefc; color: #1d1e1f; font-weight: 700;`}
  svg:nth-of-type(2) { margin-left: auto; }
`;
const Stage = styled.div`
  flex: 1;
  min-height: 0;
  display: flex;
`;
const Canvas = styled.div`
  flex: 1;
  min-width: 0;
  position: relative;
  overflow: hidden;
  background: #fefefc;
  border: solid #fefefc;
  border-width: 1px 0 0 1px;
`;
const Drawing = styled.svg`
  display: block;
  width: 100%;
  height: 100%;
  fill: none;
  text { font-family: "Liberation Sans", Arial, sans-serif; fill: #161616; font-size: 14px; }
  text.heading { font-size: 39px; font-weight: 700; fill: #d6000c; }
  .duct { stroke: #6460ba; }
  .leader { stroke: #555; }
`;
const NavBar = styled.div`
  position: absolute;
  top: 0;
  right: 2px;
  width: 24px;
  height: 85px;
  padding: 2px 0;
  display: flex;
  flex-direction: column;
  align-items: center;
  justify-content: space-between;
  border: 1px solid #bfc0bd;
  border-radius: 3px;
  background: #f6f6f4;
`;
const NavDot = styled.button`
  align-self: flex-end;
  width: 6px;
  height: 6px;
  margin-right: 2px;
  && { border: 1px solid #a5a6a4; border-radius: 50%; background: #dededb; }
`;
const NavItem = styled.div<{ $line?: boolean }>`
  display: flex;
  flex-direction: column;
  align-items: center;
  width: 20px;
  ${p => p.$line && css`border-bottom: 1px solid #cfd0cd;`}
  svg + svg { margin: -2px 0; opacity: 0.6; }
`;
const VScroll = styled.div`
  flex: none;
  width: 9px;
  display: flex;
  justify-content: flex-end;
  padding-top: 207px;
  background: #efefed;
`;
const ViewControls = styled.div`
  display: flex;
  align-items: center;
  height: 15px;
  padding: 0 1px 0 19px;
  background: #f1f1ef;
`;
const Scale = styled.button`
  width: 41px;
  text-align: left;
  color: #222;
`;
const Fill = styled.div`
  flex: 1;
`;
const HScroll = styled.div`
  flex: 1;
  display: flex;
  justify-content: center;
  padding-right: 10px;
`;

const StatusBar = styled.footer`
  display: flex;
  align-items: center;
  height: 17px;
  padding: 1px 45px 0 1px;
  background: #cbccc9;
  white-space: nowrap;
  color: #2a2c2e;
`;
const Message = styled.span`
  flex: none;
  width: 542px;
  white-space: pre;
`;
const Count = styled.span<{ $w: number }>`
  width: ${p => p.$w}px;
`;

/* ---------- data ---------- */

const tabs: [string, number][] = [
  ['Architecture', 61], ['Structure', 50], ['Steel', 33], ['Precast', 43], ['Systems', 48],
  ['Insert', 38], ['Annotate', 51], ['Analyze', 46], ['Massing & Site', 75], ['Collaborate', 61],
  ['View', 33], ['Manage', 47], ['Add-Ins', 49],
];
const viewProps: [string, string, boolean][] = [
  ['View Name', '0 - Mech', false],
  ['Dependency', 'Independent', true],
  ['Title on Sheet', '', false],
  ['Referencing Sheet', '', true],
  ['Referencing Detail', '', true],
];
const phaseProps: [string, string][] = [['Phase Filter', 'Show All'], ['Phase', 'New Construction']];
/* each character is one indent column: B box, | through line, + tee, L elbow */
const tree: [string, string][] = [
  ['B', 'Views (Discipline)'],
  ['|B', 'Mechanical'],
  ['||B', 'HVAC'],
  ['|| B', 'Floor Plans'],
  ['|| |+', '0 - Mech'],
  ['|| |L', '1 - Mech'],
  ['|| B', 'Ceiling Plans'],
  ['|| |+', '0 - Ceiling Mech'],
  ['|| |L', '1 - Ceiling Mech'],
  ['|| B', '3D Views'],
  ['|| |L', '{3D}'],
  ['|| B', 'Elevations (Building Elevation)'],
  ['||  +', 'East - Mech'],
  ['||  +', 'North - Mech'],
  ['||  +', 'South - Mech'],
];
const viewTools = ['hatch', 'box', 'sunX', 'shadowX', 'cropX', 'crop', 'glasses', 'bulbS', 'tempView', 'analytic', 'constraint'];
const selectTools = ['selLink', 'selUnder', 'selPin', 'selFace', 'dragSel', 'gear'];

const Tool = ({ name, label, w, h, on }: { name: string; label?: string; w?: number; h?: number; on?: boolean }) => (
  <IconButton aria-label={label ?? name} $w={w} $h={h} $on={on}><Icon name={name} /></IconButton>
);
const Caret = ({ w = 9 }: { w?: number }) => <Tool name="caret" label="More" w={w} />;
const Stack = ({ names, w }: { names: string[]; w: number }) => (
  <Column $w={w} $rows={3}>{names.map(n => <Tool key={n} name={n} />)}</Column>
);
const Pair = ({ names, w }: { names: string[]; w: number }) => (
  <Column $w={w} $rows={2}>
    {names.map(n => <IconButton key={n} aria-label={n} $w={26} $h={26}><BigIcon name={n} /></IconButton>)}
  </Column>
);
const Big = ({ name, lines, w, on }: { name: string; lines: string[]; w: number; on?: boolean }) => (
  <BigButton $w={w} $on={on}>
    <BigIcon name={name} />
    {lines.map((l, i) => (i === 0 ? <BigLabel key={l}>{l}</BigLabel> : <span key={l}>{l}</span>))}
  </BigButton>
);

const QuickAccess = () => (
  <Tools>
    <IconButton aria-label="Application menu"><Letter $color="#1c62a5">R</Letter></IconButton>
    <Tool name="home" label="Home" /><Rule $w={3} />
    <Tool name="open" /><Tool name="save" /><Tool name="sync" /><Caret />
    <Tool name="undo" /><Caret /><Tool name="redo" /><Caret />
    <Tool name="print" /><Rule $line /><Tool name="measure" /><Caret />
    <Rule $w={1} /><Tool name="dim" /><Tool name="tag" />
    <IconButton aria-label="Text"><Letter $color={INK}>A</Letter></IconButton><Rule $line />
    <Tool name="view3d" /><Caret /><Tool name="section" /><Tool name="thin" on /><Rule />
    <Tool name="closeHidden" /><Tool name="switchWin" /><Caret /><Tool name="customize" w={14} />
  </Tools>
);

const RibbonPanels = () => (
  <Ribbon>
    <Panel $w={46}>
      <PanelBody $pad={6}><Big name="pointer" lines={['Modify']} w={33} on /></PanelBody>
      <PanelTitle>Select<Icon name="caret" /></PanelTitle>
    </Panel>
    <Panel $w={46}>
      <PanelBody>
        <Column $w={45} $rows={2}>
          <IconButton aria-label="Type properties" $w={30} $h={26}><BigIcon name="typeProps" /></IconButton>
          <IconButton aria-label="Properties" $w={30} $h={27} $on><BigIcon name="props" /></IconButton>
        </Column>
      </PanelBody>
      <PanelTitle>Properties</PanelTitle>
    </Panel>
    <Panel $w={63}>
      <PanelBody $pad={7}>
        <BigButton $w={28}><BigIcon name="paste" /><BigLabel>Paste</BigLabel><Icon name="caret" /></BigButton>
        <Spacer $w={6} /><Stack names={['scissors', 'copy', 'match']} w={18} />
      </PanelBody>
      <PanelTitle>Clipboard</PanelTitle>
    </Panel>
    <Panel $w={105}>
      <PanelBody $pad={3}>
        <Column $w={54} $rows={3} $start>
          <TextTool><Icon name="notch" />Notch<Icon name="caret" /></TextTool>
          <TextTool><Icon name="cut" />Cut<Icon name="caret" /></TextTool>
          <TextTool><Icon name="join" />Join<Icon name="caret" /></TextTool>
        </Column>
        <Stack names={['cope', 'wallJoin', 'splitFace']} w={18} />
        <Stack names={['face', 'paint2', 'hammer']} w={20} />
        <Column $w={7} $rows={3}><span /><Caret w={7} /><span /></Column>
      </PanelBody>
      <PanelTitle>Geometry</PanelTitle>
    </Panel>
    <Panel $w={182}>
      <PanelBody $pad={4}>
        <Pair names={['align', 'move']} w={29} />
        <Pair names={['offset', 'copyL']} w={29} />
        <Pair names={['mirrorPick', 'rotate']} w={29} />
        <Pair names={['mirrorDraw', 'trimCorner']} w={29} />
        <Spacer $w={2} />
        <Stack names={['split', 'array', 'trim']} w={19} />
        <Stack names={['splitGap', 'scale', 'trimM']} w={19} />
        <Stack names={['unpin', 'pin', 'del']} w={19} />
      </PanelBody>
      <PanelTitle>Modify</PanelTitle>
    </Panel>
    <Panel $w={46}>
      <PanelBody $pad={1}>
        <Stack names={['bulb', 'brush', 'cutProfile']} w={18} />
        <Column $w={7} $rows={3}><Caret w={7} /><Caret w={7} /></Column>
        <Stack names={['override', 'linework']} w={19} />
      </PanelBody>
      <PanelTitle>View</PanelTitle>
    </Panel>
    <Panel $w={45}>
      <PanelBody $pad={6}>
        <Pair names={['ruler', 'aligned']} w={26} />
        <Column $w={9} $rows={2}><Caret /><Caret /></Column>
      </PanelBody>
      <PanelTitle>Measure</PanelTitle>
    </Panel>
    <Panel $w={59}>
      <PanelBody $pad={2}>
        <Pair names={['group', 'assembly']} w={28} />
        <Pair names={['similar', 'parts']} w={28} />
      </PanelBody>
      <PanelTitle>Create</PanelTitle>
    </Panel>
    <Spacer $w={5} />
    <Panel $w={185} $ctx>
      <PanelBody $ctx>
        <Big name="justify" lines={['Justification']} w={53} />
        <Big name="autoConnect" lines={['Automatically', 'Connect']} w={58} on />
        <Big name="inhElev" lines={['Inherit', 'Elevation']} w={42} />
        <Big name="inhSize" lines={['Inherit', 'Size']} w={29} />
      </PanelBody>
      <PanelTitle>Placement Tools</PanelTitle>
    </Panel>
    <Panel $w={80} $ctx>
      <PanelBody $ctx $pad={6}>
        <Big name="addVert" lines={['Add', 'Vertical']} w={33} on />
        <Big name="slope" lines={['Change', 'Slope']} w={36} />
      </PanelBody>
      <PanelTitle>Offset Connections</PanelTitle>
    </Panel>
    <Panel $w={52} $ctx>
      <PanelBody $ctx $pad={5}><Big name="tagL" lines={['Tag on', 'Placement']} w={44} /></PanelBody>
      <PanelTitle>Tag</PanelTitle>
    </Panel>
  </Ribbon>
);

const PropertiesPalette = () => (
  <Palette>
    <PaletteHead>Properties<Tool name="x" label="Close properties" w={15} /></PaletteHead>
    <TypeRow>
      <SelectBox $w={434} $h={16}>
        <select aria-label="Element type"><option>Floor Plan: 0 - Mech</option></select>
        <Icon name="chevron" />
      </SelectBox>
      <EditType><Icon name="typeGrid" />Edit Type</EditType>
    </TypeRow>
    <Scrolled>
      <PropTable>
        <colgroup><col width="233" /><col /><col width="9" /></colgroup>
        <tbody>
          {viewProps.map(([k, v, m]) => <PropRow key={k} $muted={m}><th scope="row">{k}</th><td>{v}</td><td /></PropRow>)}
          <GroupRow><th colSpan={2}>Phasing</th><th><Svg width="9" height="10" viewBox="0 0 9 10">{small.expand}</Svg></th></GroupRow>
          {phaseProps.map(([k, v]) => <PropRow key={k}><th scope="row">{k}</th><td>{v}</td><td /></PropRow>)}
        </tbody>
      </PropTable>
      <Track $top={90}><Thumb $w={6} $h={18} /></Track>
    </Scrolled>
  </Palette>
);

const ProjectBrowser = () => (
  <Palette $grow>
    <PaletteHead>Project Browser - Project2<Tool name="x" label="Close browser" w={15} /></PaletteHead>
    <Scrolled>
      <Tree>
        {tree.map(([cells, label], row) => (
          <Branch key={row} $bold={row === 4}>
            {cells.split('').map((c, i) => (
              <Guide key={i} $kind={c === 'B' ? '-' : c}>{c === 'B' && <Toggle aria-label={`Collapse ${label}`} />}</Guide>
            ))}
            {row === 0 && <Icon name="views" />}
            <BranchName $root={row === 0}>{label}</BranchName>
          </Branch>
        ))}
      </Tree>
      <Track $top={13}><Thumb $w={6} $h={81} /></Track>
    </Scrolled>
  </Palette>
);

const Plan = () => (
  <Drawing aria-label="Floor plan 0 - Mech">
    <g transform="translate(-494 -206)">
      <text className="heading" x="976" y="230" textAnchor="end">Mechanical setting in Revit</text>
      <path d="M493 236h483" stroke="#d6000c" strokeWidth="4" />
      <g className="duct">
        <path d="M613.500 314.500h87v8h-87zM704.500 326.500h8v62h-8zM700.500 314.500c8 0 12 5 12 12M700.500 322.500c3 0 4 1 4 4M703 326.500h10" />
        <path d="M494 453.500h61M494 461.500h61M567 453.500h141.500v8H567" />
        <path d="M556.500 388.500h8v106h-8zM560.500 388.500v106" />
        <path d="M555.500 444.500l11 10.500M566.500 444.500l-11 10.500" stroke="#2b2b70" />
        <path d="M784.500 356.500h112v8h-112zM784.500 360.500h111M901.500 369.500h8v71h-8zM905.500 370v70" />
        <path d="M896.500 356.500c8 0 13 5 13 13M896.500 364.500c3 0 5 2 5 5M896.500 360.500c6 0 9 3 9 9M898.500 357v8M901 371.500h9" />
      </g>
      <g className="leader">
        <path d="M560.500 401.500h57M826.500 319v42M905.500 396.500h34" />
        <path d="M556 519.500h7M567 519.500h6M564.500 511v7M564.500 522v7" />
      </g>
      <text x="618" y="406">400x300RAD</text>
      <text x="811" y="315">ø400</text>
      <text x="940" y="401">ø400</text>
    </g>
  </Drawing>
);

const App = () => (
  <>
    <GlobalStyle />
    <Page>
      <Window>
        <TitleBar>
          <QuickAccess />
          <Caption>Autodesk Revit 2021.1.2 - Project2 - Floor Plan: 0 - Mech</Caption>
          <Tools>
            <Tool name="left" label="Collapse search" w={10} />
            <Tool name="binoculars" label="Search" />
            <Account><Icon name="person" />3devoke</Account>
            <Caret /><Rule $w={3} /><Tool name="cart" label="App store" /><Rule $w={8} $line />
            <Tool name="help" label="Help" /><Caret />
            <Rule $w={42} />
            <Tool name="min" label="Minimize" /><Tool name="max" label="Maximize" />
            <Rule $w={2} /><Tool name="x" label="Close" w={14} />
          </Tools>
        </TitleBar>
        <TabRow>
          <Tab $w={33} $kind="file">File</Tab>
          {tabs.map(([t, w]) => <Tab key={t} $w={w}>{t}</Tab>)}
          <Tab $w={90} $kind="active">Modify | Place Duct</Tab>
          <Spacer $w={15} />
          <IconButton aria-label="Ribbon display" $w={22}>
            <Svg width="20" height="10" viewBox="0 0 20 10">
              <rect x="1.500" y="2.500" width="10" height="5" rx="1.500" fill="#eee" stroke={INK} />
              <path d="M4.500 6h4l-2-2.500zM14.500 3.500h4l-2 3z" fill="#333" />
            </Svg>
          </IconButton>
        </TabRow>
        <RibbonPanels />
        <OptionsBar><OptionsTint /></OptionsBar>
        <Workspace>
          <Dock>
            <PropertiesPalette />
            <ProjectBrowser />
          </Dock>
          <ViewArea>
            <ViewTabs>
              <ViewTab $w={96} $on><Icon name="plan" />0 - Mech<Icon name="x" /></ViewTab>
              <ViewTab $w={97}><Icon name="cube" />{'{3D}'}</ViewTab>
              <ViewTab $w={96}><Icon name="sheet" />-</ViewTab>
              <Fill />
              <Tool name="customize" label="Tab list" w={8} />
            </ViewTabs>
            <Stage>
              <Canvas>
                <Plan />
                <NavBar>
                  <NavDot aria-label="Close navigation bar" />
                  <NavItem $line><BigIcon name="wheel" size={20} /><Icon name="caret" /></NavItem>
                  <NavItem><BigIcon name="zoomRegion" size={20} /><Icon name="caret" /></NavItem>
                  <NavDot aria-label="Navigation options" />
                </NavBar>
              </Canvas>
              <VScroll><Thumb $w={6} $h={13} /></VScroll>
            </Stage>
            <ViewControls>
              <Scale>1 : 200</Scale>
              {viewTools.map(n => <Tool key={n} name={n} w={16} h={14} />)}
              <HScroll><Thumb $w={13} $h={6} /></HScroll>
            </ViewControls>
          </ViewArea>
        </Workspace>
        <StatusBar>
          <Message>{'MIDPOINT  of [Ducts : Rectangular Duct : Flanged Radius Bend / Shoe Branch].  400 x 300 @ 3200'}</Message>
          <Tool name="worksets" />
          <Spacer $w={2} />
          <SelectBox $w={153} $h={14}>
            <select aria-label="Active workset"><option> </option></select>
            <Icon name="chevron" />
          </SelectBox>
          <Spacer $w={3} />
          <Tool name="request" /><Count $w={14}>:0</Count>
          <Tool name="options" /><Tool name="optGrey" />
          <Spacer $w={1} />
          <SelectBox $w={154} $h={14} $muted>
            <select aria-label="Design option"><option>Main Model</option></select>
            <Icon name="chevron" />
          </SelectBox>
          <Fill />
          {selectTools.map(n => <Tool key={n} name={n} />)}
          <Tool name="filter" w={15} /><Count $w={7}>:0</Count>
        </StatusBar>
      </Window>
    </Page>
  </>
);

export default App;
